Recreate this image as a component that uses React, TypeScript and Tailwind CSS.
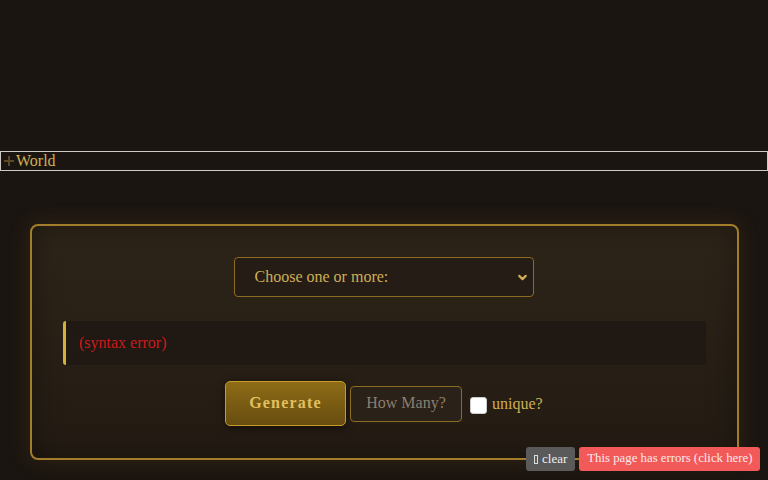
import { ChevronDown } from 'lucide-react'

const serif = { fontFamily: '"Liberation Serif", "Times New Roman", serif' }

export default function App() {
  return (
    <div className="relative w-[768px] h-[480px] overflow-hidden bg-[#1b1511]" style={serif}>
      {/* Top spacer */}
      <div className="h-[151px]" />

      {/* World row */}
      <div className="h-[20px] border border-[#cfcac2] flex items-center bg-[#1b1511]">
        <span className="ml-[2px] w-[12px] h-[12px] relative mr-[1px]">
          <span className="absolute left-[5px] top-[1px] w-[2px] h-[10px] bg-[#5c4a26]" />
          <span className="absolute left-[1px] top-[5px] w-[10px] h-[2px] bg-[#5c4a26]" />
        </span>
        <span className="text-[16px] leading-none text-[#cfae55]">World</span>
      </div>

      {/* Panel */}
      <div className="mt-[53px] ml-[30px] w-[709px] h-[236px] rounded-[8px] border-2 border-[#a27d2a] bg-gradient-to-b from-[#2e2519] to-[#231b13] shadow-[0_0_22px_rgba(150,110,30,0.18),inset_0_0_30px_rgba(0,0,0,0.35)] px-[31px] pt-[31px]">
        <div className="flex justify-center pr-[2px]">
          <div className="relative w-[300px] h-[40px] rounded-[4px] border border-[#8e6d22] bg-[#241c15] flex items-center pl-[20px]">
            <span className="text-[16px] text-[#cfae55]">Choose one or more:</span>
            <ChevronDown className="absolute right-[4px] top-[13px] w-[13px] h-[13px] text-[#cfae55]" strokeWidth={4} />
          </div>
        </div>

        <div className="mt-[24px] h-[44px] rounded-[3px] border-l-[3px] border-[#d6b234] bg-[#1f1813] flex items-center pl-[13px]">
          <span className="text-[16px] text-[#cc1b1b]">(syntax error)</span>
        </div>

        <div className="mt-[16px] flex items-center">
          <div className="ml-[162px] w-[121px] h-[45px] rounded-[5px] border border-[#c79a2a] bg-gradient-to-b from-[#8e6c17] to-[#674d0f] shadow-[0_2px_8px_rgba(0,0,0,0.5)] flex items-center justify-center pb-[2px]">
            <span className="text-[16px] font-bold tracking-[1.2px] text-[#e0c060]">Generate</span>
          </div>
          <div className="ml-[4px] w-[112px] h-[36px] rounded-[4px] border border-[#8e6d22] bg-[#2a2118] flex items-center justify-center pb-[1px]">
            <span className="text-[16px] text-[#8a7f70]">How Many?</span>
          </div>
          <span className="ml-[8px] mt-[3px] w-[17px] h-[17px] rounded-[3px] bg-white border border-[#ccc]" />
          <span className="ml-[5px] text-[16px] text-[#cfae55]">unique?</span>
        </div>
      </div>

      {/* Error overlay */}
      <div className="absolute left-[526px] top-[447px] flex items-center gap-[4px]">
        <div className="h-[24px] px-[8px] rounded-[3px] bg-[#5a5a5a] flex items-center gap-[4px] text-[13px] text-[#f0f0f0]">
          <span className="w-[4px] h-[9px] border border-[#ddd]" />
          <span>clear</span>
        </div>
        <div className="h-[24px] px-[8px] rounded-[3px] bg-[#f25959] flex items-center text-[12.8px] text-[#fbeaea]">
          This page has errors (click here)
        </div>
      </div>
    </div>
  )
}
